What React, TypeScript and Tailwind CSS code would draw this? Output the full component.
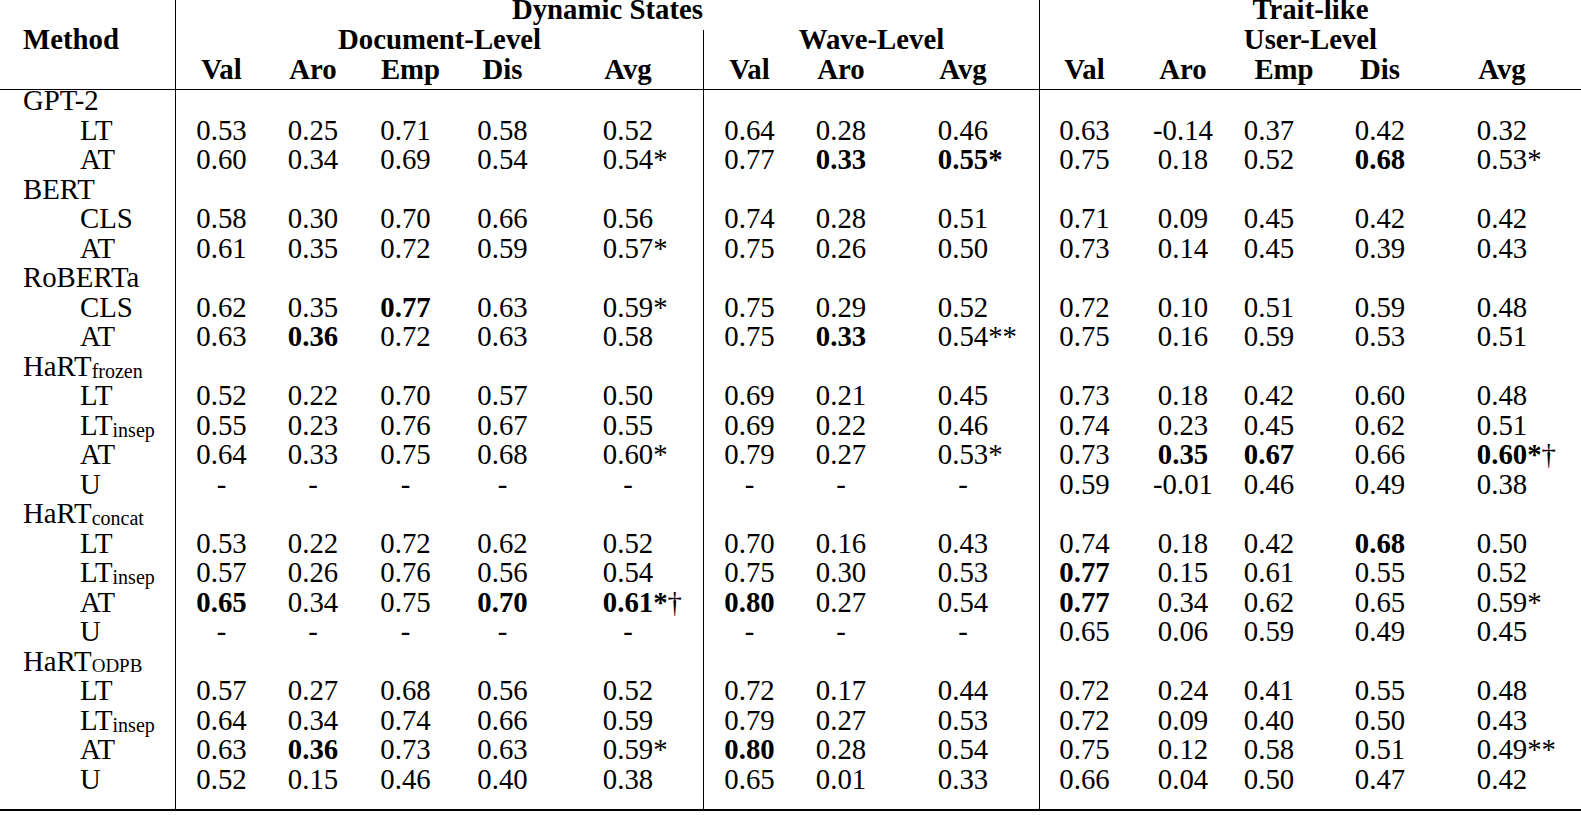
const COLS =
  "grid grid-cols-[176px_91px_92px_93px_101px_150px_92px_92px_152px_90px_108px_64px_158px_86px_1fr]";

type Row =
  | { kind: "group"; label: string; sub?: string; caps?: boolean }
  | { kind: "item"; label: string; sub?: string; vals: string[] };

// "!" marks a bold entry; anything after the number (*, **, †) hangs to the right
const rows: Row[] = [
  { kind: "group", label: "GPT-2" },
  { kind: "item", label: "LT", vals: ["0.53", "0.25", "0.71", "0.58", "0.52", "0.64", "0.28", "0.46", "0.63", "-0.14", "0.37", "0.42", "0.32"] },
  { kind: "item", label: "AT", vals: ["0.60", "0.34", "0.69", "0.54", "0.54*", "0.77", "!0.33", "!0.55*", "0.75", "0.18", "0.52", "!0.68", "0.53*"] },
  { kind: "group", label: "BERT" },
  { kind: "item", label: "CLS", vals: ["0.58", "0.30", "0.70", "0.66", "0.56", "0.74", "0.28", "0.51", "0.71", "0.09", "0.45", "0.42", "0.42"] },
  { kind: "item", label: "AT", vals: ["0.61", "0.35", "0.72", "0.59", "0.57*", "0.75", "0.26", "0.50", "0.73", "0.14", "0.45", "0.39", "0.43"] },
  { kind: "group", label: "RoBERTa" },
  { kind: "item", label: "CLS", vals: ["0.62", "0.35", "!0.77", "0.63", "0.59*", "0.75", "0.29", "0.52", "0.72", "0.10", "0.51", "0.59", "0.48"] },
  { kind: "item", label: "AT", vals: ["0.63", "!0.36", "0.72", "0.63", "0.58", "0.75", "!0.33", "0.54**", "0.75", "0.16", "0.59", "0.53", "0.51"] },
  { kind: "group", label: "HaRT", sub: "frozen" },
  { kind: "item", label: "LT", vals: ["0.52", "0.22", "0.70", "0.57", "0.50", "0.69", "0.21", "0.45", "0.73", "0.18", "0.42", "0.60", "0.48"] },
  { kind: "item", label: "LT", sub: "insep", vals: ["0.55", "0.23", "0.76", "0.67", "0.55", "0.69", "0.22", "0.46", "0.74", "0.23", "0.45", "0.62", "0.51"] },
  { kind: "item", label: "AT", vals: ["0.64", "0.33", "0.75", "0.68", "0.60*", "0.79", "0.27", "0.53*", "0.73", "!0.35", "!0.67", "0.66", "!0.60*†"] },
  { kind: "item", label: "U", vals: ["-", "-", "-", "-", "-", "-", "-", "-", "0.59", "-0.01", "0.46", "0.49", "0.38"] },
  { kind: "group", label: "HaRT", sub: "concat" },
  { kind: "item", label: "LT", vals: ["0.53", "0.22", "0.72", "0.62", "0.52", "0.70", "0.16", "0.43", "0.74", "0.18", "0.42", "!0.68", "0.50"] },
  { kind: "item", label: "LT", sub: "insep", vals: ["0.57", "0.26", "0.76", "0.56", "0.54", "0.75", "0.30", "0.53", "!0.77", "0.15", "0.61", "0.55", "0.52"] },
  { kind: "item", label: "AT", vals: ["!0.65", "0.34", "0.75", "!0.70", "!0.61*†", "!0.80", "0.27", "0.54", "!0.77", "0.34", "0.62", "0.65", "0.59*"] },
  { kind: "item", label: "U", vals: ["-", "-", "-", "-", "-", "-", "-", "-", "0.65", "0.06", "0.59", "0.49", "0.45"] },
  { kind: "group", label: "HaRT", sub: "ODPB", caps: true },
  { kind: "item", label: "LT", vals: ["0.57", "0.27", "0.68", "0.56", "0.52", "0.72", "0.17", "0.44", "0.72", "0.24", "0.41", "0.55", "0.48"] },
  { kind: "item", label: "LT", sub: "insep", vals: ["0.64", "0.34", "0.74", "0.66", "0.59", "0.79", "0.27", "0.53", "0.72", "0.09", "0.40", "0.50", "0.43"] },
  { kind: "item", label: "AT", vals: ["0.63", "!0.36", "0.73", "0.63", "0.59*", "!0.80", "0.28", "0.54", "0.75", "0.12", "0.58", "0.51", "0.49**"] },
  { kind: "item", label: "U", vals: ["0.52", "0.15", "0.46", "0.40", "0.38", "0.65", "0.01", "0.33", "0.66", "0.04", "0.50", "0.47", "0.42"] },
];

const metrics = ["Val", "Aro", "Emp", "Dis", "Avg", "Val", "Aro", "Avg", "Val", "Aro", "Emp", "Dis", "Avg"];

// columns 6 (wave Val) and 9 (user Val) carry the vertical rules
const ruled = (i: number) => i === 5 || i === 8;

function Value({ v }: { v: string }) {
  const bold = v.startsWith("!");
  const raw = bold ? v.slice(1) : v;
  const m = raw.match(/^(-?\d\.\d\d|-)(.*)$/);
  const num = m ? m[1] : raw;
  const suffix = m ? m[2] : "";
  const stars = suffix.replace("†", "");
  const dagger = suffix.includes("†");
  return (
    <span className={bold ? "font-bold" : ""}>
      {num}
      {suffix && (
        <span className="inline-block w-0 whitespace-nowrap">
          {stars}
          {dagger && <span className="font-normal">†</span>}
        </span>
      )}
    </span>
  );
}

function Label({ text, sub, caps }: { text: string; sub?: string; caps?: boolean }) {
  return (
    <>
      {text}
      {sub && (
        <span className={caps ? "text-[19px] align-[-1px]" : "text-[20px] align-[-2px]"}>{sub}</span>
      )}
    </>
  );
}

function BodyRow({ row }: { row: Row }) {
  const vals = row.kind === "item" ? row.vals : Array(13).fill("");
  return (
    <div className={`${COLS} h-[29.5px] leading-[21.6px]`}>
      <div className={`border-r border-black whitespace-nowrap ${row.kind === "group" ? "pl-[23px]" : "pl-[80px]"}`}>
        <Label text={row.label} sub={row.sub} caps={row.kind === "group" ? row.caps : false} />
      </div>
      {vals.map((v: string, i: number) => (
        <div key={i} className={`text-center whitespace-nowrap ${ruled(i) ? "border-l border-black" : ""}`}>
          {v && <Value v={v} />}
        </div>
      ))}
      <div />
    </div>
  );
}

export default function App() {
  return (
    <div className="w-[1581px] bg-white text-black font-['Liberation_Serif',serif] text-[28.8px]">
      <div className={`${COLS} grid-rows-[30px_30px_29px] leading-[19.6px] font-bold`}>
        <div className="col-start-1 row-start-1 row-span-3 border-r border-black pl-[23px] pt-[30px]">Method</div>
        <div className="col-start-2 col-span-8 row-start-1 text-center">Dynamic States</div>
        <div className="col-start-10 col-span-6 row-start-1 text-center border-l border-black">Trait-like</div>
        <div className="col-start-2 col-span-5 row-start-2 text-center">Document-Level</div>
        <div className="col-start-7 col-span-3 row-start-2 text-center border-l border-black">Wave-Level</div>
        <div className="col-start-10 col-span-6 row-start-2 text-center border-l border-black">User-Level</div>
        {metrics.map((m, i) => (
          <div key={i} className={`row-start-3 text-center ${ruled(i) ? "border-l border-black" : ""}`}>
            {i === 2 ? (
              <span className="inline-block translate-x-[5px]">{m}</span>
            ) : i === 10 ? (
              <span className="inline-block translate-x-[15px]">{m}</span>
            ) : (
              m
            )}
          </div>
        ))}
      </div>
      <div className="h-px bg-black" />
      {rows.map((row, i) => (
        <BodyRow key={i} row={row} />
      ))}
      <div className={`${COLS} h-[11px]`}>
        <div className="border-r border-black" />
        {metrics.map((_, i) => (
          <div key={i} className={ruled(i) ? "border-l border-black" : ""} />
        ))}
        <div />
      </div>
      <div className="h-[2px] bg-black" />
    </div>
  );
}
